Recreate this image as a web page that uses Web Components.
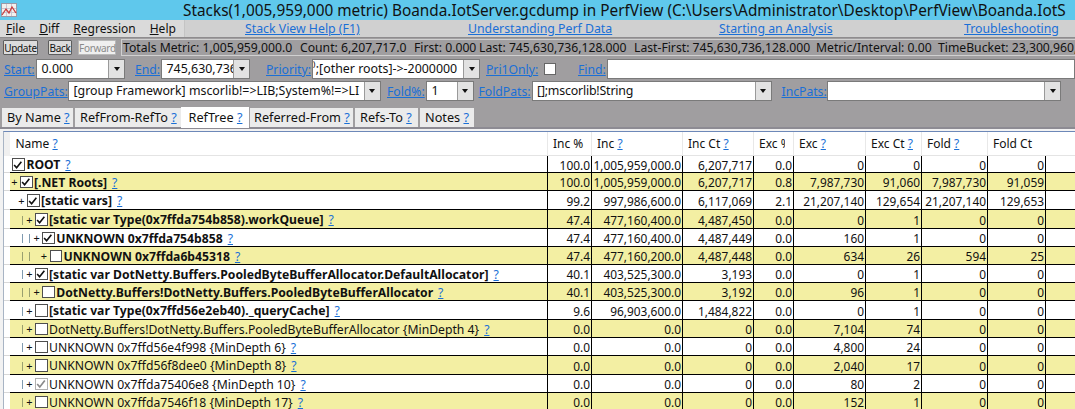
<!DOCTYPE html>
<html><head><meta charset="utf-8"><style>
html,body{margin:0;padding:0;height:409px;overflow:hidden;background:#a09ea0}
body{font:12px "Noto Sans","Open Sans",sans-serif;color:#111}
</style></head><body>
<perf-window>
<title-bar>Stacks(1,005,959,000 metric) Boanda.IotServer.gcdump in PerfView (C:\Users\Administrator\Desktop\PerfView\Boanda.IotS</title-bar>
<menu-bar></menu-bar>
<totals-row></totals-row>
<filter-row row="1"></filter-row>
<filter-row row="2"></filter-row>
<tab-strip></tab-strip>
<data-grid></data-grid>
</perf-window>
<script>
const LINK='#1a6fd6';
function def(name,css,html){
  customElements.define(name,class extends HTMLElement{
    connectedCallback(){
      if(this.shadowRoot)return;
      const r=this.attachShadow({mode:'open'});
      r.innerHTML='<style>'+css+'</style>'+(typeof html==='function'?html(this):html);
    }
  });
}
def('perf-window',':host{display:flex;flex-direction:column;width:1075px;height:409px;overflow:hidden}','<slot></slot>');
def('title-bar',`:host{display:flex;align-items:center;height:20px;background:#5fc8ec;font-size:15.35px;color:#111;white-space:nowrap;overflow:hidden}
svg{margin:0 0 0 1px;flex:none}span{margin-left:166px}`,
`<svg width="16" height="14" viewBox="0 0 16 14"><rect x=".5" y=".5" width="15" height="13" fill="#f4f0ee" stroke="#9a9aa8"/><path d="M1 5.5H15M1 9.5H15M5.5 1V13M10.5 1V13" stroke="#c8c8d4"/><path d="M1 12L5 6L8 10L11 4L15 10" fill="none" stroke="#c83c3c" stroke-width="1.3"/></svg><span><slot></slot></span>`);
def('menu-bar',`:host{display:flex;align-items:center;height:17px;background:#d0d0d0;border-bottom:1px solid #8e8c8e;white-space:nowrap;font-size:12.3px}
.m{display:flex;align-items:center;height:100%;width:185px;background:#dadada;box-sizing:border-box;padding-left:6px;flex:none;border-right:1px solid #c4c4c4;font-size:12px}
.m span{margin-right:14px}.m u{text-decoration:underline}
a{color:${LINK};text-decoration:underline;flex:none}`,
`<div class="m"><span><u>F</u>ile</span><span><u>D</u>iff</span><span><u>R</u>egression</span><span><u>H</u>elp</span></div>
<a style="margin-left:60px;width:117px">Stack View Help (F1)</a><a style="margin-left:106px;width:142px">Understanding Perf Data</a><a style="margin-left:109px;width:112px">Starting an Analysis</a><a style="margin-left:133px">Troubleshooting</a>`);
def('totals-row',`:host{display:flex;align-items:center;height:19px;padding-left:3px;white-space:nowrap;overflow:hidden;font-size:12.2px}
button{font:inherit;font-size:10px;letter-spacing:-.3px;height:15px;padding:0;border:1px solid #5e5e5e;border-radius:1px;background:#dcdcdc;color:#111;box-sizing:border-box;flex:none;line-height:12px}
button[disabled]{color:#8a8a8a;border-color:#b8b8b8;background:#efefef}
.t{margin-left:4.5px;height:17px;flex:1;display:flex;align-items:center;padding-left:1.5px;border:1px solid #d0d0d0;border-right:0;box-sizing:border-box;overflow:hidden}
.t span{flex:none}`,
`<button style="width:35px">Update</button><button style="width:24px;margin-left:10px">Back</button><button disabled style="width:38px;margin-left:6px">Forward</button>
<div class="t"><span style="width:177px">Totals Metric: 1,005,959,000.0</span><span style="width:114px">Count: 6,207,717.0</span><span style="width:65px">First: 0.000</span><span style="width:155px">Last: 745,630,736,128.000</span><span style="width:182px">Last-First: 745,630,736,128.000</span><span style="width:122px">Metric/Interval: 0.00</span><span>TimeBucket: 23,300,960,512.0</span></div>`);
def('combo-box',`:host{display:flex;height:20px;box-sizing:border-box;border:1px solid #7a7a7a;background:#fff;flex:none;font-size:12.4px}
.v{flex:1;min-width:0;overflow:hidden;white-space:nowrap;padding-left:4.5px;line-height:18px}
.b{width:15px;flex:none;background:#e2e2e2;border-left:1px solid #9a9a9a;display:flex;align-items:center;justify-content:center}
.b i{border:3.5px solid transparent;border-top:4px solid #111;border-bottom:0}`,
`<div class="v"><slot></slot></div><div class="b"><i></i></div>`);
def('filter-row',`:host{display:flex;align-items:center;height:20px;white-space:nowrap;font-size:12.2px}
:host([row="1"]){margin-top:2px}:host([row="2"]){margin-top:2px}
a{color:${LINK};text-decoration:underline;flex:none}
.cb{width:12px;height:12px;background:#fff;border:1px solid #666;flex:none;box-sizing:border-box}
.in{flex:1;height:20px;background:#fff;border:1px solid #7a7a7a;box-sizing:border-box}`,
h=>h.getAttribute('row')==='1'?
`<a style="margin-left:4px;width:32px">Start:</a><combo-box style="width:89px">0.000</combo-box>
<a style="margin-left:10px;width:26px">End:</a><combo-box style="width:89px">745,630,736</combo-box>
<a style="margin-left:16px;width:46px">Priority:</a><combo-box style="width:168px"><span style="margin-left:-4.5px">⁾;[other roots]-&gt;-2000000</span></combo-box>
<a style="margin-left:6px;width:57.6px">Pri1Only:</a><span class="cb"></span>
<a style="margin-left:22.4px;width:28.6px">Find:</a><div class="in"></div>`:
`<a style="margin-left:4px;width:64px">GroupPats:</a><combo-box style="width:312.5px">[group Framework] mscorlib!=&gt;LIB;System%!=&gt;LI</combo-box>
<a style="margin-left:6.5px;width:39px">Fold%:</a><combo-box style="width:47.5px">1</combo-box>
<a style="margin-left:5px;width:53px">FoldPats:</a><combo-box style="width:240px"><span style="letter-spacing:-.2px">[];mscorlib!String</span></combo-box>
<a style="margin-left:10px;width:45px">IncPats:</a><combo-box style="width:234.5px"></combo-box>`);
def('tab-strip',`:host{display:flex;align-items:flex-end;height:22px;padding-left:2px;margin-top:4px;border-bottom:2px solid #8d8b93;white-space:nowrap;font-size:12.7px;flex:none}
div{height:19px;line-height:18px;background:#ebebeb;box-sizing:border-box;padding-left:5px;flex:none}
.a{background:#fff;height:21px;margin-bottom:-1px;line-height:20px;position:relative}
a{color:${LINK};text-decoration:underline}`,
`<div style="width:71px">By Name <a>?</a></div><div style="width:106px;margin-left:2px">RefFrom-RefTo <a>?</a></div><div class="a" style="width:68px;padding-left:7.5px">RefTree <a>?</a></div><div style="width:103px;margin-left:1px;padding-left:4px">Referred-From <a>?</a></div><div style="width:63px;margin-left:2px">Refs-To <a>?</a></div><div style="width:54px;margin-left:2px">Notes <a>?</a></div>`);

const TRACK='537px 44px 91px 71px 40px 72px 56px 66px 59px';
const H=['Inc %','Inc','Inc Ct','Exc %','Exc','Exc Ct','Fold','Fold Ct'];
const HQ=[0,1,1,0,1,1,1,0];
const R=[
[0,'c','b','ROOT',173,'100.0','1,005,959,000.0','6,207,717','0.0','0','0','0','0'],
[1,'c','b','[.NET Roots]',191,'100.0','1,005,959,000.0','6,207,717','0.8','7,987,730','91,060','7,987,730','91,059'],
[2,'c','b','[static vars]',210,'99.2','997,986,600.0','6,117,069','2.1','21,207,140','129,654','21,207,140','129,653'],
[3,'c','b','[static var Type(0x7ffda754b858).workQueue]',229,'47.4','477,160,400.0','4,487,450','0.0','0','1','0','0'],
[4,'c','b','UNKNOWN 0x7ffda754b858',247,'47.4','477,160,400.0','4,487,449','0.0','160','1','0','0'],
[5,'','b','UNKNOWN 0x7ffda6b45318',265,'47.4','477,160,200.0','4,487,448','0.0','634','26','594','25'],
[3,'c','b','[static var DotNetty.Buffers.PooledByteBufferAllocator.DefaultAllocator]',283,'40.1','403,525,300.0','3,193','0.0','0','1','0','0'],
[4,'','b','DotNetty.Buffers!DotNetty.Buffers.PooledByteBufferAllocator',301,'40.1','403,525,300.0','3,192','0.0','96','1','0','0'],
[3,'','b','[static var Type(0x7ffd56e2eb40)._queryCache]',320,'9.6','96,903,600.0','1,484,822','0.0','0','1','0','0'],
[3,'','','DotNetty.Buffers!DotNetty.Buffers.PooledByteBufferAllocator {MinDepth 4}',338,'0.0','0.0','0','0.0','7,104','74','0','0'],
[3,'','','UNKNOWN 0x7ffd56e4f998 {MinDepth 6}',356,'0.0','0.0','0','0.0','4,800','24','0','0'],
[3,'','','UNKNOWN 0x7ffd56f8dee0 {MinDepth 8}',375,'0.0','0.0','0','0.0','2,040','17','0','0'],
[3,'g','','UNKNOWN 0x7ffda75406e8 {MinDepth 10}',393,'0.0','0.0','0','0.0','80','2','0','0'],
[3,'','','UNKNOWN 0x7ffda7546f18 {MinDepth 17}',411,'0.0','0.0','0','0.0','152','1','0','0']];
def('grid-row',`:host{display:flex;overflow:hidden;box-sizing:border-box}
.g{width:6px;flex:none;box-sizing:border-box;border-bottom:1px solid #d8d8d8}
.r{flex:1;display:grid;grid-template-columns:${TRACK};box-sizing:border-box;border-bottom:1px solid #000;background:var(--bg,#fff);min-width:0}
.n{display:flex;align-items:center;white-space:nowrap;overflow:hidden;padding-left:var(--ind);padding-top:1px;font-size:12.2px}
.name{margin-left:1.5px}.name.b{font-weight:700}
.c{text-align:right;border-left:1px solid #000;line-height:var(--lh);white-space:nowrap;overflow:hidden;font-size:11.9px;padding-right:1px;box-sizing:border-box}
.c:last-child{border-right:1px solid #000}
.t{width:7.25px;flex:none;text-align:center;font-size:11px;line-height:12px;display:block;font-weight:400;margin:0 2px 0 -2px}
.s{width:7.25px;flex:none}
.v{width:7.25px;flex:none;height:10px;position:relative;display:block}
.v:before{content:"";position:absolute;left:1px;top:1px;bottom:0;width:1px;background:var(--tick,#8aa0a8)}
.k{width:12.5px;height:12.5px;flex:none;box-sizing:border-box;border:1px solid #4e4e4e;background:#fff;display:flex;align-items:center;justify-content:center}
.k.g{border-color:#b0b0b0}
a{color:${LINK};text-decoration:underline;margin-left:5px;font-weight:400;font-size:12.2px}`,
h=>{const i=+h.dataset.i,r=R[i],d=r[0];
 const n=d<3?0:(d==3?1:2);let b='';for(let j=0;j<n;j++)b+='<b class="v"></b>';
 const ck=r[1]?`<svg width="10" height="10" viewBox="0 0 10 10"><path d="M1.2 5L3.8 8L8.8 1.6" fill="none" stroke="${r[1]=='g'?'#8a8a8a':'#111'}" stroke-width="1.7"/></svg>`:'';
 const cells=r.slice(5).map(x=>`<div class="c">${x}</div>`).join('');
 return `<div class="g"></div><div class="r"><div class="n">${b}${d==5?'<span class="s"></span>':''}${d>0?'<span class="t">+</span>':''}<span class="k ${r[1]}">${ck}</span><span class="name ${r[2]}">${r[3]}<a>?</a></span></div>${cells}</div>`;});
def('data-grid',`:host{display:flex;flex-direction:column;flex:1;min-height:0;background:#f2f2f2;padding-top:2px;overflow:hidden}
.f{flex:1;min-height:0;margin-left:3px;background:#fff;border-top:1px solid #6d88b8;border-left:1px solid #a8b4c4;overflow:hidden}
.hr{display:flex;height:24px;flex:none}
.hg{width:6px;background:#f0f0f0;flex:none}
.h{flex:1;display:grid;grid-template-columns:${TRACK};background:#fff;box-sizing:border-box;border-bottom:1px solid #e4e4e4;white-space:nowrap;font-size:12px}
.h div{padding-left:5px;overflow:hidden;border-left:1px solid #e8e8e8;line-height:24px;box-sizing:border-box}
.h div span{display:block;overflow:hidden}
.h div:first-child{border:0;padding-left:5.5px}
a{color:${LINK};text-decoration:underline}`,
h=>{
 let s='<div class="f"><div class="hr"><div class="hg"></div><div class="h"><div>Name <a>?</a></div>';
 H.forEach((t,i)=>s+=`<div style="padding-right:${i==3?8:(i==5?7:2)}px"><span>${t}${HQ[i]||i==5?' <a>?</a>':''}</span></div>`);
 s+='</div></div>';
 let prev=156;
 R.forEach((r,i)=>{
  const hh=r[4]-prev;prev=r[4];
  const ind={0:2.4,1:2.75,2:2.5,3:10.5,4:10.5,5:10.5}[r[0]]+(r[0]==2?7.25:0);
  s+=`<grid-row data-i="${i}" style="height:${hh}px;--lh:${hh+1}px;--ind:${ind}px;--bg:${i%2?'#f3efa3':'#fff'};--tick:${i%2?'#9aa070':'#7f9ab0'}"></grid-row>`;
 });
 return s+'</div>';});
</script>
</body></html>
